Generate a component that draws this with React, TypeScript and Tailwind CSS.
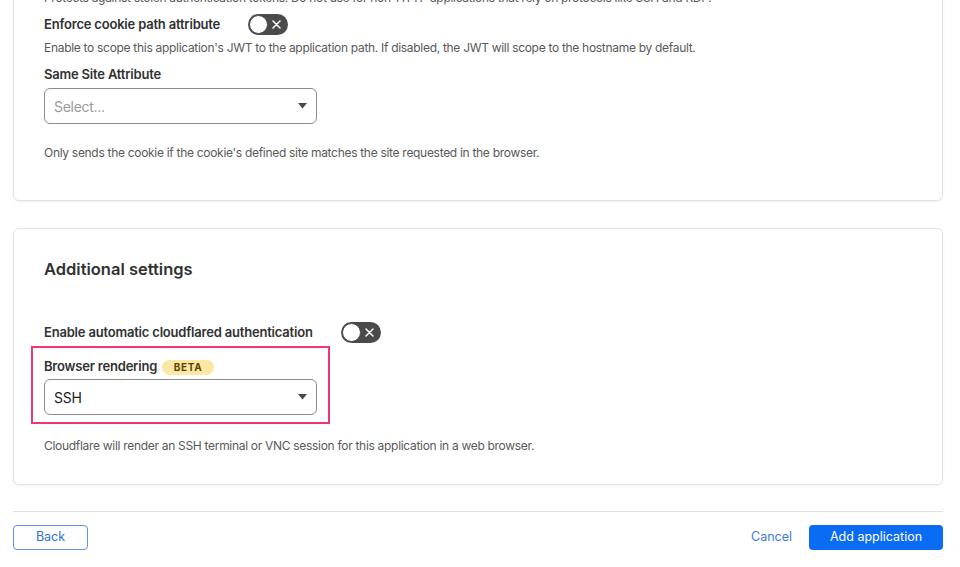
import React from "react";

function Toggle() {
  return (
    <div className="relative h-[21px] w-[40px] shrink-0 rounded-full bg-[#4a4a4a]">
      <div className="absolute left-[1px] top-[1px] h-[19px] w-[19px] rounded-full border border-[#4a4a4a] bg-white" />
      <svg className="absolute left-[24px] top-[6px]" width="9" height="9" viewBox="0 0 9 9">
        <path d="M1 1 L8 8 M8 1 L1 8" stroke="white" strokeWidth="1.5" strokeLinecap="round" />
      </svg>
    </div>
  );
}

function Select({ value, placeholder }: { value?: string; placeholder?: string }) {
  return (
    <div className="flex h-[36px] w-[273px] items-center justify-between rounded-[6px] border border-[#8c8c8c] bg-white pl-[9px] pr-[9px]">
      <span
        className={
          value
            ? "text-[14px] tracking-[-0.02em] text-[#222]"
            : "text-[14px] tracking-[-0.02em] text-[#9a9a9a]"
        }
      >
        {value ?? placeholder}
      </span>
      <svg width="9" height="6" viewBox="0 0 9 6">
        <path d="M0 0 H9 L4.5 5.5 Z" fill="#4a4a4a" />
      </svg>
    </div>
  );
}

export default function App() {
  return (
    <div
      className="h-[567px] w-[960px] overflow-hidden bg-white"
      style={{ fontFamily: "Inter, 'Noto Sans', sans-serif" }}
    >
      <div className="ml-[13px] w-[930px]">
        {/* Card 1 */}
        <div className="-mt-[40px] rounded-[6px] border border-[#e3e3e3] bg-white px-[30px] pb-[38px] pt-[28px] shadow-[0_1px_3px_rgba(0,0,0,0.06)]">
          <p className="h-[18px] text-[12px] leading-[18px] tracking-[-0.025em] text-[#595959]">
            Protects against stolen authentication tokens. Do not use for non-HTTP applications that rely on protocols like SSH and RDP.
          </p>
          <div className="mt-[7px] flex h-[21px] items-center gap-[28px]">
            <span className="text-[13px] font-semibold tracking-[-0.015em] text-[#313131]">Enforce cookie path attribute</span>
            <Toggle />
          </div>
          <p className="mt-[4px] h-[18px] text-[12px] leading-[18px] tracking-[-0.025em] text-[#595959]">
            Enable to scope this application's JWT to the application path. If disabled, the JWT will scope to the hostname by default.
          </p>
          <div className="mt-[7px] h-[20px] text-[13px] font-semibold leading-[20px] tracking-[-0.015em] text-[#313131]">
            Same Site Attribute
          </div>
          <div className="mt-[4px]">
            <Select placeholder="Select..." />
          </div>
          <p className="mt-[20px] h-[18px] text-[12px] leading-[18px] tracking-[-0.025em] text-[#595959]">
            Only sends the cookie if the cookie's defined site matches the site requested in the browser.
          </p>
        </div>

        {/* Card 2 */}
        <div className="mt-[27px] rounded-[6px] border border-[#e3e3e3] bg-white px-[30px] pb-[29px] pt-[28px] shadow-[0_1px_3px_rgba(0,0,0,0.06)]">
          <h2 className="h-[24px] text-[16.5px] font-semibold leading-[24px] text-[#313131]">Additional settings</h2>
          <div className="mt-[41px] flex h-[21px] items-center gap-[28px]">
            <span className="text-[13px] font-semibold tracking-[-0.015em] text-[#313131]">
              Enable automatic cloudflared authentication
            </span>
            <Toggle />
          </div>
          <div className="-ml-[13px] mt-[3px] w-[299px] border-2 border-[#f0386e] px-[11px] pb-[7px] pt-[9px]">
            <div className="flex h-[20px] items-center gap-[5px]">
              <span className="text-[13px] font-semibold tracking-[-0.015em] text-[#313131]">Browser rendering</span>
              <span className="flex h-[15px] w-[52px] items-center justify-center rounded-full bg-[#fce7a4] text-[10px] font-bold tracking-[0.07em] text-[#5a4200]">
                BETA
              </span>
            </div>
            <div className="mt-[2px]">
              <Select value="SSH" />
            </div>
          </div>
          <p className="mt-[13px] h-[18px] text-[12px] leading-[18px] tracking-[-0.025em] text-[#595959]">
            Cloudflare will render an SSH terminal or VNC session for this application in a web browser.
          </p>
        </div>

        <div className="mt-[26px] border-t border-[#e0e0e0]" />

        <div className="mt-[13px] flex items-center justify-between">
          <button className="flex h-[25px] w-[75px] items-center justify-center rounded-[4px] border border-[#5b95ea] text-[12.5px] text-[#2f6fd8]">
            Back
          </button>
          <div className="flex items-center gap-[17px]">
            <button className="text-[12.5px] text-[#3a7be0]">Cancel</button>
            <button className="flex h-[25px] w-[134px] items-center justify-center rounded-[4px] bg-[#0a6cf5] text-[12.5px] text-white">
              Add application
            </button>
          </div>
        </div>
      </div>
    </div>
  );
}
